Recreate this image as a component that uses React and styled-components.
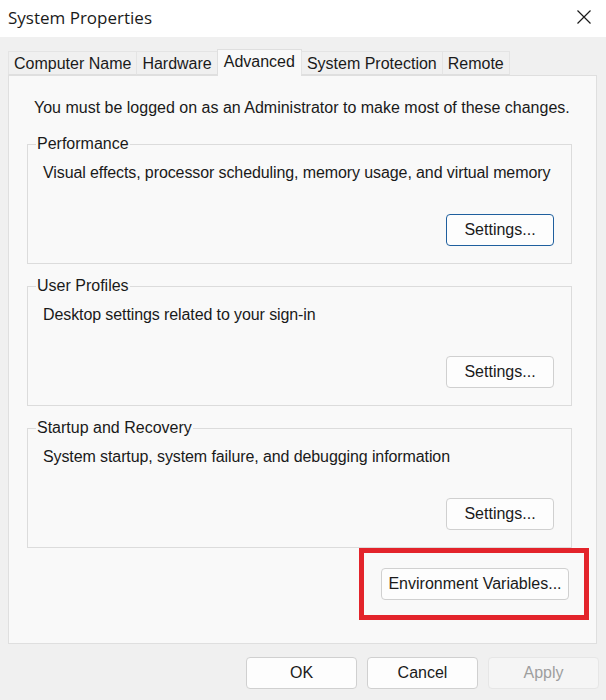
import React from 'react';
import styled, { createGlobalStyle } from 'styled-components';

const GlobalStyle = createGlobalStyle`
  html, body {
    margin: 0;
    padding: 0;
    background: #f0f0f0;
  }
  body {
    font-family: "Liberation Sans", Arial, sans-serif;
    color: #1a1a1a;
  }
`;

const tabs = ['Computer Name', 'Hardware', 'Advanced', 'System Protection', 'Remote'];

const groups = [
  {
    title: 'Performance',
    text: 'Visual effects, processor scheduling, memory usage, and virtual memory',
    focused: true,
  },
  {
    title: 'User Profiles',
    text: 'Desktop settings related to your sign-in',
  },
  {
    title: 'Startup and Recovery',
    text: 'System startup, system failure, and debugging information',
  },
];

const App = () => {
  return (
    <>
      <GlobalStyle />
      <Window>
        <TitleBar>
          <Title>System Properties</Title>
          <CloseButton aria-label="Close">
            <svg width="16" height="16" viewBox="0 0 16 16">
              <path d="M1.5 1.5 L14.5 14.5 M14.5 1.5 L1.5 14.5" stroke="#1a1a1a" strokeWidth="1.2" fill="none" />
            </svg>
          </CloseButton>
        </TitleBar>
        <Body>
          <TabStrip>
            {tabs.map((t) => (
              <Tab key={t} active={t === 'Advanced'}>{t}</Tab>
            ))}
          </TabStrip>
          <Panel>
            <Notice>You must be logged on as an Administrator to make most of these changes.</Notice>
            <Groups>
              {groups.map((g) => (
                <Group key={g.title}>
                  <Legend>{g.title}</Legend>
                  <Description>{g.text}</Description>
                  <ButtonRow>
                    <Button focused={g.focused}>Settings...</Button>
                  </ButtonRow>
                </Group>
              ))}
            </Groups>
            <EnvRow>
              <Highlight>
                <Button wide>Environment Variables...</Button>
              </Highlight>
            </EnvRow>
          </Panel>
          <Footer>
            <Button footer>OK</Button>
            <Button footer>Cancel</Button>
            <Button footer disabled>Apply</Button>
          </Footer>
        </Body>
      </Window>
    </>
  );
};

const Window = styled.div`
  width: 606px;
  height: 700px;
  display: flex;
  flex-direction: column;
  background: #f0f0f0;
  overflow: hidden;
`;

const TitleBar = styled.div`
  height: 37px;
  flex: none;
  background: #ffffff;
  display: flex;
  align-items: center;
  justify-content: space-between;
  padding: 0 14px 0 8px;
`;

const Title = styled.div`
  font-family: "Open Sans", "Noto Sans", sans-serif;
  font-size: 17px;
  color: #1a1a1a;
  padding-bottom: 3px;
`;

const CloseButton = styled.div`
  display: flex;
  align-items: center;
  padding-bottom: 4px;
`;

const Body = styled.div`
  display: flex;
  flex-direction: column;
  padding: 11px 0 0 0;
`;

const TabStrip = styled.div`
  display: flex;
  align-items: flex-end;
  height: 27px;
  padding-left: 9px;
  position: relative;
  z-index: 1;
`;

const Tab = styled.div`
  box-sizing: border-box;
  font-size: 16px;
  line-height: 20px;
  padding: ${(p) => (p.active ? '2px 6px 5px' : '2px 5px 1px')};
  height: ${(p) => (p.active ? '27px' : '24px')};
  margin-bottom: ${(p) => (p.active ? '-1px' : '0')};
  background: ${(p) => (p.active ? '#f9f9f9' : '#f0f0f0')};
  border: 1px solid ${(p) => (p.active ? '#dfdfdf' : '#e4e4e4')};
  border-bottom: ${(p) => (p.active ? 'none' : '1px solid #dfdfdf')};
  margin-left: -1px;
  white-space: nowrap;
  color: #1a1a1a;
`;

const Panel = styled.div`
  margin: 0 9px 0 8px;
  height: 569px;
  box-sizing: border-box;
  background: #f9f9f9;
  border: 1px solid #dfdfdf;
  padding: 22px 24px 0 18px;
  display: flex;
  flex-direction: column;
`;

const Notice = styled.div`
  font-size: 16px;
  line-height: 20px;
  padding-left: 7px;
  white-space: nowrap;
`;

const Groups = styled.div`
  display: flex;
  flex-direction: column;
  gap: 12px;
  margin-top: 16px;
`;

const Group = styled.fieldset`
  margin: 0;
  min-width: 0;
  padding: 9px 17px 17px 15px;
  border: 1px solid #dcdcdc;
  display: flex;
  flex-direction: column;
`;

const Legend = styled.legend`
  font-size: 16px;
  line-height: 20px;
  padding: 0 1px;
  margin-left: -7px;
`;

const Description = styled.div`
  font-size: 16px;
  line-height: 20px;
  letter-spacing: -0.1px;
  white-space: nowrap;
`;

const ButtonRow = styled.div`
  display: flex;
  justify-content: flex-end;
  margin-top: 31px;
`;

const Button = styled.button`
  box-sizing: border-box;
  width: ${(p) => (p.wide ? '188px' : p.footer ? '111px' : '108px')};
  height: 32px;
  font-family: "Liberation Sans", Arial, sans-serif;
  font-size: 16px;
  color: ${(p) => (p.disabled ? '#9e9e9e' : '#1a1a1a')};
  background: ${(p) => (p.disabled ? '#f5f5f5' : '#fdfdfd')};
  border: 1px solid ${(p) => (p.focused ? '#1f5f9e' : p.disabled ? '#e6e6e6' : '#d0d0d0')};
  border-radius: 4px;
  padding: 0;
`;

const EnvRow = styled.div`
  display: flex;
  justify-content: flex-end;
  margin-right: -17px;
`;

const Highlight = styled.div`
  border: 5px solid #e3242b;
  padding: 15px 15px 15px 17px;
`;

const Footer = styled.div`
  display: flex;
  justify-content: flex-end;
  gap: 10px;
  padding: 13px 7px 0 0;
`;

export default App;
